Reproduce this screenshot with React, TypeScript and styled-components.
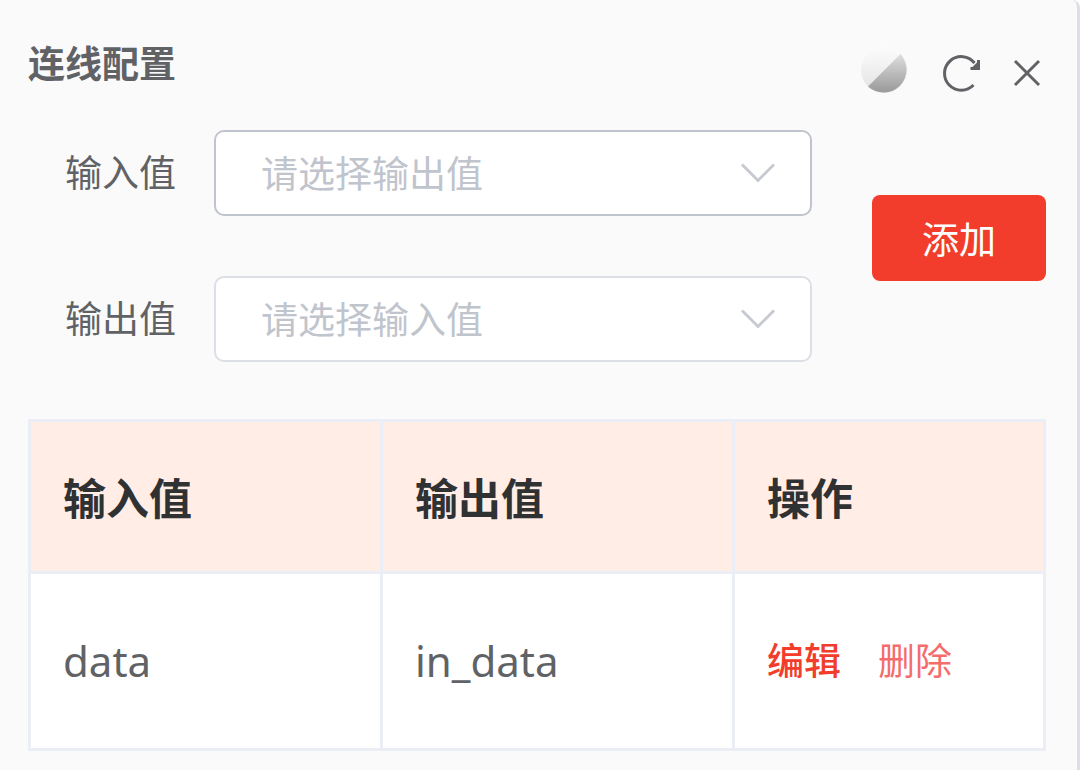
import React from "react";
import styled, { createGlobalStyle } from "styled-components";

const GlobalStyle = createGlobalStyle`
  *, *::before, *::after { box-sizing: border-box; }
  body {
    margin: 0;
    background: #ffffff;
    color: #606266;
    font-family: "Noto Sans", "Noto Sans CJK SC", sans-serif;
    font-size: 37px;
  }
  button, select { font: inherit; margin: 0; }
`;

const Panel = styled.main`
  padding: 40px 31px 19px 28px;
  background: #fafafa;
  border-right: 3px solid #dcdfe6;
  border-top-right-radius: 8px;
`;

const Header = styled.header`
  display: flex;
  align-items: flex-start;
  justify-content: space-between;
  margin-bottom: 24px;
`;

const Title = styled.h1`
  margin: 0;
  font-size: 37px;
  line-height: 48px;
  font-weight: 700;
`;

const Actions = styled.div`
  display: flex;
  align-items: center;
  height: 66px;
  gap: 22px;
`;

const IconButton = styled.button<{ $spaced?: boolean }>`
  display: flex;
  padding: 0;
  margin-right: ${(p) => (p.$spaced ? "10px" : "0")};
  border: 0;
  background: none;
  color: #606266;
  cursor: pointer;
`;

const Form = styled.form`
  display: flex;
  align-items: center;
  gap: 60px;
  margin-bottom: 57px;
`;

const Fields = styled.div`
  display: flex;
  flex: 1;
  flex-direction: column;
  gap: 60px;
`;

const Field = styled.div`
  display: flex;
  align-items: center;
  gap: 38px;
`;

const Label = styled.label`
  width: 148px;
  line-height: 48px;
  text-align: right;
`;

const SelectBox = styled.div`
  position: relative;
  flex: 1;
`;

const Select = styled.select<{ $active?: boolean }>`
  display: block;
  width: 100%;
  height: 86px;
  padding: 0 96px 0 45px;
  appearance: none;
  border: 2px solid ${(p) => (p.$active ? "#c0c4cc" : "#dcdfe6")};
  border-radius: 10px;
  background: #ffffff;
  color: #c0c4cc;
`;

const Chevron = styled.svg`
  position: absolute;
  top: 32px;
  right: 36px;
  pointer-events: none;
`;

const AddButton = styled.button`
  width: 174px;
  height: 86px;
  margin-bottom: 16px;
  padding: 0;
  border: 0;
  border-radius: 8px;
  background: #f33d2c;
  color: #ffffff;
  cursor: pointer;
`;

const Table = styled.table`
  width: 100%;
  table-layout: fixed;
  border-collapse: collapse;
  font-size: 42px;
  line-height: 60px;
  text-align: left;
`;

const ActionColumn = styled.col`
  width: 311px;
`;

const HeadCell = styled.th`
  height: 152px;
  padding: 4px 32px 0;
  border: 3px solid #ebeef5;
  background: #ffede6;
  color: #303133;
  font-size: 43px;
  font-weight: 700;
`;

const Cell = styled.td`
  height: 177px;
  padding: 0 32px;
  border: 3px solid #ebeef5;
  background: #ffffff;
`;

const RowActions = styled.div`
  display: flex;
  gap: 37px;
`;

const TextButton = styled.button<{ $danger?: boolean }>`
  padding: 0;
  border: 0;
  background: none;
  color: ${(p) => (p.$danger ? "#f56c6c" : "#f33d2c")};
  font-size: 37px;
  font-weight: ${(p) => (p.$danger ? 400 : 500)};
  cursor: pointer;
`;

function SelectField({ id, label, placeholder, active }: {
  id: string;
  label: string;
  placeholder: string;
  active?: boolean;
}) {
  return (
    <Field>
      <Label htmlFor={id}>{label}</Label>
      <SelectBox>
        <Select id={id} $active={active} defaultValue="">
          <option value="">{placeholder}</option>
        </Select>
        <Chevron width="36" height="24" viewBox="0 0 36 24" fill="none" stroke="#c8cad2" strokeWidth="3" aria-hidden="true">
          <path d="M2 2.500 18 18.500 34 2.500" />
        </Chevron>
      </SelectBox>
    </Field>
  );
}

const rows = [{ input: "data", output: "in_data" }];

export default function App() {
  return (
    <>
      <GlobalStyle />
      <Panel>
        <Header>
          <Title>连线配置</Title>
          <Actions>
            <IconButton type="button" aria-label="主题" $spaced>
              <svg width="48" height="54" viewBox="0 0 48 54">
                <defs>
                  <linearGradient id="light" x1="0" y1="0" x2="0" y2="1">
                    <stop offset="0" stopColor="#fcfcfc" />
                    <stop offset="1" stopColor="#e2e2e2" />
                  </linearGradient>
                  <linearGradient id="dark" x1="0" y1="0" x2="0" y2="1">
                    <stop offset="0" stopColor="#dedede" />
                    <stop offset="1" stopColor="#999999" />
                  </linearGradient>
                </defs>
                <circle cx="24" cy="24" r="23" fill="url(#light)" />
                <path d="M40.500 8A23 23 0 0 1 8 40.500Z" fill="url(#dark)" />
              </svg>
            </IconButton>
            <IconButton type="button" aria-label="刷新">
              <svg width="44" height="44" viewBox="0 0 44 44" fill="none" stroke="currentColor" strokeWidth="3">
                <path d="M34.500 12A16.800 16.800 0 1 0 33.500 34" />
                <path d="M38.500 9V17.500H30.500" />
                <path d="M38.500 10V17.500H31Z" fill="currentColor" stroke="none" />
              </svg>
            </IconButton>
            <IconButton type="button" aria-label="关闭">
              <svg width="40" height="44" viewBox="0 0 40 44" fill="none" stroke="currentColor" strokeWidth="3">
                <path d="M9 10 33 34M33 10 9 34" />
              </svg>
            </IconButton>
          </Actions>
        </Header>
        <Form>
          <Fields>
            <SelectField id="input-value" label="输入值" placeholder="请选择输出值" active />
            <SelectField id="output-value" label="输出值" placeholder="请选择输入值" />
          </Fields>
          <AddButton type="button">添加</AddButton>
        </Form>
        <Table>
          <colgroup>
            <col />
            <col />
            <ActionColumn />
          </colgroup>
          <thead>
            <tr>
              <HeadCell>输入值</HeadCell>
              <HeadCell>输出值</HeadCell>
              <HeadCell>操作</HeadCell>
            </tr>
          </thead>
          <tbody>
            {rows.map((row) => (
              <tr key={row.input}>
                <Cell>{row.input}</Cell>
                <Cell>{row.output}</Cell>
                <Cell>
                  <RowActions>
                    <TextButton type="button">编辑</TextButton>
                    <TextButton type="button" $danger>删除</TextButton>
                  </RowActions>
                </Cell>
              </tr>
            ))}
          </tbody>
        </Table>
      </Panel>
    </>
  );
}
